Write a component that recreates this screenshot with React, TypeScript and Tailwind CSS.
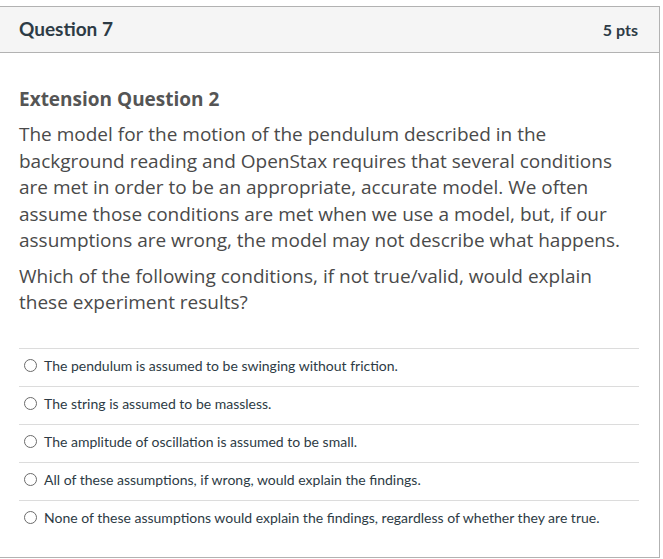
import React from 'react'

const answers = [
  'The pendulum is assumed to be swinging without friction.',
  'The string is assumed to be massless.',
  'The amplitude of oscillation is assumed to be small.',
  'All of these assumptions, if wrong, would explain the findings.',
  'None of these assumptions would explain the findings, regardless of whether they are true.',
]

const lato = { fontFamily: 'Lato, "Liberation Sans", sans-serif' }

function AnswerRow({ text }: { text: string }) {
  return (
    <label className="flex h-[38px] items-center border-t border-[#dcdcdc] pb-[3px] pl-[5px]">
      <span className="h-[13px] w-[13px] shrink-0 rounded-full border border-[#6b6b6b] bg-white" />
      <span className="ml-[7px] text-[14px] text-[#2d3b45]">{text}</span>
    </label>
  )
}

export default function App() {
  return (
    <div className="h-[559px] w-[663px] overflow-hidden bg-white pt-[6px]">
      <div className="ml-[-1px] w-[661px] border border-[#b2b2b2] bg-white">
        <div
          className="flex h-[46px] items-center justify-between border-b border-[#b2b2b2] bg-[#f5f5f5] pl-[19px] pr-[21px] text-[#2d3b45]"
          style={lato}
        >
          <span className="text-[19px] font-bold">Question 7</span>
          <span className="text-[16px] font-bold">5 pts</span>
        </div>

        <div className="pl-[19px] pr-[20px] pt-[33px] pb-[19px]">
          <div style={{ fontFamily: '"Open Sans", "Liberation Sans", sans-serif' }}>
            <h3 className="mb-[9px] text-[19px] font-bold leading-[26px] text-[#555555]">
              Extension Question 2
            </h3>
            <p className="mb-[9px] text-[19px] leading-[26.5px] text-[#4a4a4a]">
              The model for the motion of the pendulum described in the background reading and OpenStax
              requires that several conditions are met in order to be an appropriate, accurate model. We
              often assume those conditions are met when we use a model, but, if our assumptions are wrong,
              the model may not describe what happens.
            </p>
            <p className="text-[19px] leading-[26.5px] text-[#4a4a4a]">
              Which of the following conditions, if not true/valid, would explain these experiment results?
            </p>
          </div>

          <div className="mt-[32px]" style={lato}>
            {answers.map((a) => (
              <AnswerRow key={a} text={a} />
            ))}
          </div>
        </div>
      </div>
    </div>
  )
}
